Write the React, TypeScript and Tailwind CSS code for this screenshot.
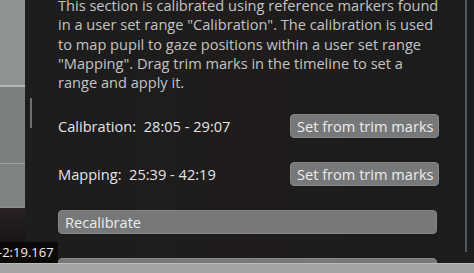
import React from "react";

const font = { fontFamily: '"Open Sans", "Noto Sans", sans-serif' };

function Btn({ children, className = "" }: { children: React.ReactNode; className?: string }) {
  return (
    <div
      className={
        "shrink-0 h-[24px] rounded-[4px] bg-[#777879] border border-[#858687] text-[#ececec] text-[14.6px] leading-[22px] pl-[6px] whitespace-nowrap overflow-hidden " +
        className
      }
    >
      {children}
    </div>
  );
}

export default function App() {
  return (
    <div className="w-[474px] h-[273px] overflow-hidden relative flex flex-col bg-[#1d1e1f]" style={font}>
      <div className="flex flex-row h-[263px] shrink-0 overflow-hidden">
        {/* video strip */}
        <div className="w-[25px] flex flex-col">
          <div className="h-[85px] bg-[#8e9392]" />
          <div className="h-[2px] bg-[#b3b8b6]" />
          <div className="h-[76px] bg-[#7c8180]" />
          <div className="h-[1px] bg-[#9ca19f]" />
          <div className="h-[42px] bg-[#7f8483]" />
          <div className="h-[2px] bg-[#8a8d8c]" />
          <div className="flex-1 bg-gradient-to-b from-[#2a2222] to-[#100b0b]" />
        </div>
        {/* panel */}
        <div className="flex-1 flex flex-row bg-gradient-to-r from-[#1d1d1e] via-[#1f1c1b] to-[#1b1c1d]">
          <div className="w-[33px] flex flex-col">
            <div className="mt-[98px] ml-[5px] w-[2px] h-[30px] bg-[#6f7070]" />
          </div>
          <div className="w-[381px] flex flex-col">
            <p className="shrink-0 mt-[-4px] text-[14.6px] leading-[19.3px] text-[#c3c4c4] w-[400px] whitespace-nowrap">
              This section is calibrated using reference markers found
              <br />
              in a user set range "Calibration". The calibration is used
              <br />
              to map pupil to gaze positions within a user set range
              <br />
              "Mapping". Drag trim marks in the timeline to set a
              <br />
              range and apply it.
            </p>
            <div className="shrink-0 mt-[22px] h-[24px] flex flex-row items-center">
              <span className="text-[14.6px] text-[#e4e4e4] whitespace-pre">Calibration:  28:05 - 29:07</span>
              <Btn className="ml-auto w-[149px]">Set from trim marks</Btn>
            </div>
            <div className="shrink-0 mt-[24px] h-[24px] flex flex-row items-center">
              <span className="text-[14.6px] text-[#e4e4e4] whitespace-pre">Mapping:  25:39 - 42:19</span>
              <Btn className="ml-auto w-[149px]">Set from trim marks</Btn>
            </div>
            <Btn className="mt-[24px] w-[379px]">Recalibrate</Btn>
            <Btn className="mt-[24px] w-[379px]">{""}</Btn>
          </div>
          <div className="flex-1 flex flex-col">
            <div className="ml-[26px] w-[2px] h-[252px] bg-[#55585a]" />
          </div>
        </div>
      </div>
      <div className="h-[10px] shrink-0 bg-[#a2a4a4] border-t border-[#b8baba]" />
      {/* timestamp overlay */}
      <div className="absolute left-0 top-[242px] w-[58px] h-[21px] bg-[#0c0909] flex items-center">
        <span className="ml-[-2px] text-[13px] text-[#f0f0f0] leading-none">-2:19.167</span>
      </div>
    </div>
  );
}
